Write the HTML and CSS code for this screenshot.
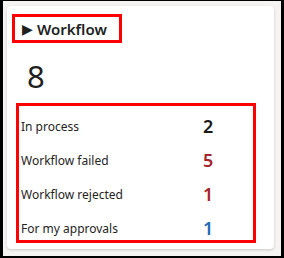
FILE: index.html
```html
<!DOCTYPE html>
<html lang="en">
<head>
  <meta charset="UTF-8" />
  <title>Workflow</title>
  <link rel="stylesheet" href="styles.css">
</head>
<body>
<div class="frame">
  <div class="card">
    <div class="card-head">
      <span class="arrow">&#9654;</span>
      <span class="title">Workflow</span>
    </div>
    <div class="total">8</div>
    <div class="stats">
      <div class="row"><span class="label">In process</span><span class="num">2</span></div>
      <div class="row"><span class="label">Workflow failed</span><span class="num red">5</span></div>
      <div class="row"><span class="label">Workflow rejected</span><span class="num red">1</span></div>
      <div class="row"><span class="label">For my approvals</span><span class="num blue">1</span></div>
    </div>
  </div>
</div>
</body>
</html>
```

FILE: styles.css
```css
* { box-sizing: border-box; }
body {
  margin: 0;
  font-family: "Noto Sans", Arial, sans-serif;
  color: #201f1e;
}
.frame {
  width: 284px;
  height: 258px;
  background: #f5f4f3;
  border: solid #000;
  border-width: 1px 3px 2px 3px;
  padding: 5px 7px 7px 4px;
}
.card {
  height: 100%;
  background: #fff;
  border-radius: 4px;
  box-shadow: 0 1px 3px rgba(0,0,0,0.18);
  padding: 8px 18px 4px 9px;
}
.card-head {
  display: flex;
  align-items: center;
  gap: 4px;
  width: 110px;
  height: 29px;
  margin-left: -4px;
  padding-left: 7px;
  border: 3px solid #ff0000;
}
.arrow {
  font-size: 14px;
  line-height: 1;
  color: #201f1e;
}
.title {
  font-size: 15px;
  font-weight: 600;
}
.total {
  font-size: 31px;
  line-height: 40px;
  margin: 13px 0 0 11px;
  font-weight: 400;
}
.stats {
  margin-top: 7px;
  height: 140px;
  border: 3.5px solid #ff0000;
  padding: 3px 0 0 2px;
}
.row {
  display: grid;
  grid-template-columns: 182px auto;
  align-items: center;
  height: 34px;
}
.label {
  font-size: 12px;
  color: #252423;
}
.num {
  font-size: 18px;
  font-weight: 600;
  color: #1b1a19;
}
.red { color: #a4262c; }
.blue { color: #1f6bb8; }
```
